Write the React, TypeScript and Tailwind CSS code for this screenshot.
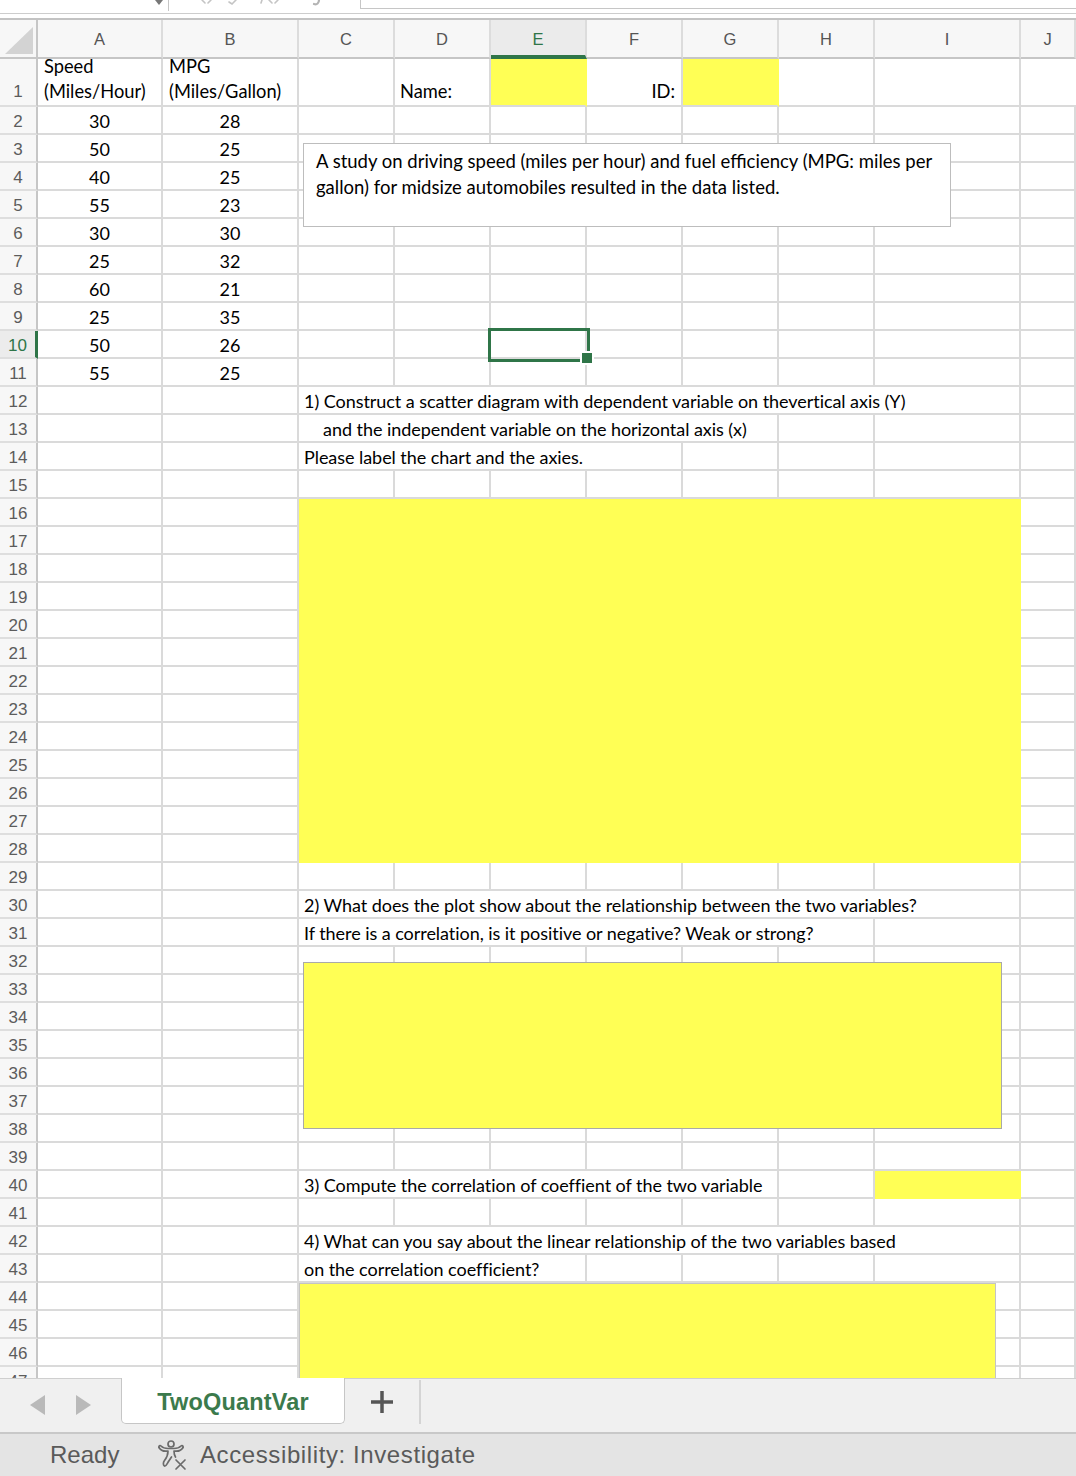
import React from 'react';

type Col = 'A' | 'B' | 'C' | 'D' | 'E' | 'F' | 'G' | 'H' | 'I' | 'J';
const COLS: Col[] = ['A', 'B', 'C', 'D', 'E', 'F', 'G', 'H', 'I', 'J'];

const COL_W: Record<Col, string> = {
  A: 'w-[125px]',
  B: 'w-[136px]',
  C: 'w-[96px]',
  D: 'w-[96px]',
  E: 'w-[96px]',
  F: 'w-[96px]',
  G: 'w-[96px]',
  H: 'w-[96px]',
  I: 'w-[146px]',
  J: 'flex-1',
};

// widths of the C..x ranges that overflowing text runs across
const SPAN_W: Record<string, string> = {
  'C-E': 'w-[288px]',
  'C-F': 'w-[384px]',
  'C-G': 'w-[480px]',
  'C-H': 'w-[576px]',
  'C-I': 'w-[722px]',
};

type Seg = {
  col?: Col;
  span?: string;
  text?: string;
  fill?: boolean;
  indent?: boolean;
};

const DATA: Record<number, [string, string]> = {
  2: ['30', '28'],
  3: ['50', '25'],
  4: ['40', '25'],
  5: ['55', '23'],
  6: ['30', '30'],
  7: ['25', '32'],
  8: ['60', '21'],
  9: ['25', '35'],
  10: ['50', '26'],
  11: ['55', '25'],
};

const plain = (from: Col[]): Seg[] => from.map((c) => ({ col: c }));

const tailFor = (r: number): Seg[] => {
  if (r >= 16 && r <= 28) return [{ span: 'C-I', fill: true }, { col: 'J' }];
  switch (r) {
    case 12:
      return [{ span: 'C-I', text: '1) Construct a scatter diagram with dependent variable on thevertical axis (Y)' }, { col: 'J' }];
    case 13:
      return [{ span: 'C-G', text: 'and the independent variable on the horizontal axis (x)', indent: true }, ...plain(['H', 'I', 'J'])];
    case 14:
      return [{ span: 'C-F', text: 'Please label the chart and the axies.' }, ...plain(['G', 'H', 'I', 'J'])];
    case 30:
      return [{ span: 'C-I', text: '2) What does the plot show about the relationship between the two variables?' }, { col: 'J' }];
    case 31:
      return [{ span: 'C-H', text: 'If there is a correlation, is it positive or negative? Weak or strong?' }, ...plain(['I', 'J'])];
    case 40:
      return [{ span: 'C-G', text: '3) Compute the correlation of coeffient of the two variable' }, { col: 'H' }, { col: 'I', fill: true }, { col: 'J' }];
    case 42:
      return [{ span: 'C-I', text: '4) What can you say about the linear relationship of the two variables based' }, { col: 'J' }];
    case 43:
      return [{ span: 'C-E', text: 'on the correlation coefficient?' }, ...plain(['F', 'G', 'H', 'I', 'J'])];
    default:
      return plain(['C', 'D', 'E', 'F', 'G', 'H', 'I', 'J']);
  }
};

const RowHeader = ({ n, active, tall }: { n: number; active?: boolean; tall?: boolean }) => (
  <div
    className={`w-[38px] shrink-0 flex justify-center border-b-2 border-b-[#dedede] font-['Liberation_Sans',sans-serif] text-[17px] ${
      tall ? 'items-end pb-[1px]' : 'items-center pt-[3px]'
    } ${active ? 'bg-[#ececec] text-[#2f7548] border-r-[3px] border-r-[#2f7548]' : 'bg-[#f7f7f7] text-[#5c5c5c] border-r-2 border-r-[#c6c6c6]'}`}
  >
    {n}
  </div>
);

const Cell = ({ seg }: { seg: Seg }) => {
  const w = seg.span ? SPAN_W[seg.span] : COL_W[seg.col as Col];
  return (
    <div
      className={`${w} shrink-0 flex items-center pt-[3px] whitespace-nowrap border-r-2 border-b-2 ${
        seg.fill ? 'bg-[#ffff55] border-[#ffff55]' : 'border-[#dadada]'
      } ${seg.indent ? 'pl-[24px]' : 'pl-[5px]'} text-[18px] tracking-[-0.05px]`}
    >
      {seg.text}
    </div>
  );
};

const DataRow = ({ r }: { r: number }) => {
  const d = DATA[r];
  return (
    <div className="h-[28px] flex shrink-0">
      <RowHeader n={r} active={r === 10} />
      <div className="w-[125px] shrink-0 flex items-center justify-center pt-[3px] border-r-2 border-b-2 border-[#dadada] text-[18px]">
        {d ? d[0] : ''}
      </div>
      <div className="w-[136px] shrink-0 flex items-center justify-center pt-[3px] border-r-2 border-b-2 border-[#dadada] text-[18px]">
        {d ? d[1] : ''}
      </div>
      {tailFor(r).map((s, i) => (
        <Cell key={i} seg={s} />
      ))}
    </div>
  );
};

const FirstRow = () => (
  <div className="h-[48px] flex shrink-0 text-[18.3px]">
    <RowHeader n={1} tall />
    <div className="w-[125px] shrink-0 flex flex-col justify-end pl-[6px] pb-0 leading-[27px] border-r-2 border-b-2 border-[#dadada]">
      <span className="-mb-[2px]">Speed</span>
      <span>(Miles/Hour)</span>
    </div>
    <div className="w-[136px] shrink-0 flex flex-col justify-end pl-[6px] pb-0 leading-[27px] border-r-2 border-b-2 border-[#dadada]">
      <span className="-mb-[2px]">MPG</span>
      <span>(Miles/Gallon)</span>
    </div>
    <div className="w-[96px] shrink-0 border-r-2 border-b-2 border-[#dadada]" />
    <div className="w-[96px] shrink-0 flex items-end pl-[5px] leading-[27px] border-r-2 border-b-2 border-[#dadada]">
      Name:
    </div>
    <div className="w-[96px] shrink-0 bg-[#ffff55] border-r-2 border-r-[#ffff55] border-b-2 border-b-[#dadada]" />
    <div className="w-[96px] shrink-0 flex items-end justify-end pr-[6px] leading-[27px] border-r-2 border-b-2 border-[#dadada]">
      ID:
    </div>
    <div className="w-[96px] shrink-0 bg-[#ffff55] border-r-2 border-r-[#ffff55] border-b-2 border-b-[#dadada]" />
    <div className="w-[96px] shrink-0 border-r-2 border-b-2 border-[#dadada]" />
    <div className="w-[146px] shrink-0 border-r-2 border-b-2 border-[#dadada]" />
    <div className="flex-1 border-b-2 border-[#dadada]" />
  </div>
);

const HeaderRow = () => (
  <div className="h-[39px] flex shrink-0 font-['Liberation_Sans',sans-serif] text-[16.5px] text-[#555]">
    <div className="w-[38px] shrink-0 bg-[#f7f7f7] border-r-2 border-b-2 border-[#c6c6c6] flex items-end justify-end pr-[3px] pb-[3px]">
      <svg width="28" height="27" viewBox="0 0 28 27">
        <polygon points="28,0 28,27 0,27" fill="#d3d3d3" />
      </svg>
    </div>
    {COLS.map((c) =>
      c === 'E' ? (
        <div
          key={c}
          className={`${COL_W[c]} shrink-0 flex items-center justify-center pt-[4px] bg-[#ebebeb] text-[#2f7548] border-r-2 border-r-[#dcdcdc] border-b-[4px] border-b-[#2f7548]`}
        >
          {c}
        </div>
      ) : (
        <div
          key={c}
          className={`${COL_W[c]} shrink-0 flex items-center justify-center pt-[2px] bg-[#f7f7f7] border-r-2 border-r-[#dcdcdc] border-b-2 border-b-[#c6c6c6]`}
        >
          {c}
        </div>
      )
    )}
  </div>
);

// bottoms of the formula bar buttons, mostly scrolled out of view
const ClippedButtons = () => (
  <svg width="191" height="11" viewBox="0 0 191 11" fill="none" stroke="#c4c4c4" strokeWidth="1.6" strokeLinecap="round">
    <path d="M33 0 L36 3 M42 0 L39 3" />
    <path d="M60 2 L63 4 L67 0" />
    <path d="M93 0 L92 3 M100 0 L103 3 M106 3 L109 0" />
    <path d="M150 0 C150 3 148 5 145 4" strokeWidth="2.2" stroke="#b3b3b3" />
  </svg>
);

const TopStrip = () => (
  <>
    <div className="h-[14px] shrink-0 flex items-start border-b border-[#cdcdcd]">
      <div className="w-[169px] h-[11px] shrink-0 border-r border-[#c6c6c6] flex justify-end pr-[5px]">
        <svg width="8" height="5" viewBox="0 0 8 5">
          <polygon points="0,0 8,0 4,5" fill="#777" />
        </svg>
      </div>
      <div className="w-[191px] h-[11px] shrink-0 overflow-hidden">
        <ClippedButtons />
      </div>
      <div className="flex-1 h-[9px] border-l border-b border-[#c6c6c6]" />
    </div>
    <div className="h-[6px] shrink-0 border-b-2 border-[#c3c3c3]" />
  </>
);

const AccessIcon = () => (
  <svg width="34" height="32" viewBox="0 0 34 32" fill="none" stroke="#6b6b6b" strokeWidth="1.7" strokeLinecap="round" strokeLinejoin="round">
    <circle cx="15" cy="5" r="3" />
    <path d="M3 8.5 C5 12 9 12.5 12 12 C12 16 10.5 19 8.5 21.5 C7 23.5 7 26 8.5 27 C10 27.5 11 25 12.5 22.5 C13.5 21 14.5 19.5 15.5 18" />
    <path d="M27 8.5 C25 12 21 12.5 18 12 C18 14.5 18.5 16.5 19.5 18" />
    <path d="M3 8.5 C2.5 7 4 6 5 7 C7 9 9 9.5 12 9.5 L18 9.5 C21 9.5 23 9 25 7 C26 6 27.5 7 27 8.5" />
    <path d="M20 21 L29 30 M29 21 L20 30" />
  </svg>
);

const TabBar = () => (
  <div className="h-[54px] shrink-0 flex items-start bg-[#f0f0f0] border-t border-[#cfcfcf]">
    <div className="w-[121px] h-[52px] shrink-0 flex items-center pl-[30px] gap-[31px]">
      <svg width="15" height="20" viewBox="0 0 15 20">
        <polygon points="15,0 15,20 0,10" fill="#b9b9b9" />
      </svg>
      <svg width="15" height="20" viewBox="0 0 15 20">
        <polygon points="0,0 0,20 15,10" fill="#b9b9b9" />
      </svg>
    </div>
    <div className="w-[224px] h-[46px] shrink-0 -mt-px pt-[4px] bg-white border-x border-b border-[#c6c6c6] rounded-b-[5px] flex items-center justify-center text-[#3b7a4c] font-bold text-[23.5px] tracking-[0.15px] font-['Liberation_Sans',sans-serif]">
      TwoQuantVar
    </div>
    <div className="w-[76px] h-[44px] shrink-0 flex items-center justify-center border-r-2 border-[#d4d4d4] mt-[1px]">
      <svg width="22" height="22" viewBox="0 0 22 22">
        <rect x="0" y="9.25" width="22" height="3.5" fill="#555" />
        <rect x="9.25" y="0" width="3.5" height="22" fill="#555" />
      </svg>
    </div>
  </div>
);

const StatusBar = () => (
  <div className="h-[44px] shrink-0 flex items-center bg-[#e4e4e4] border-t-2 border-[#c8c8c8] font-['Liberation_Sans',sans-serif] text-[24px] text-[#5a5a5a]">
    <span className="pl-[50px] w-[156px]">Ready</span>
    <AccessIcon />
    <span className="pl-[10px] tracking-[0.6px]">Accessibility: Investigate</span>
  </div>
);

export default function App() {
  const rows: number[] = [];
  for (let r = 2; r <= 47; r++) rows.push(r);

  return (
    <div className="w-[1076px] h-[1476px] bg-white overflow-hidden flex flex-col font-['Lato',sans-serif] text-black">
      <TopStrip />
      <div className="relative h-[1358px] shrink-0 overflow-hidden flex flex-col">
        <HeaderRow />
        <FirstRow />
        {rows.map((r) => (
          <DataRow key={r} r={r} />
        ))}

        {/* description text box */}
        <div className="absolute left-[303px] top-[123px] w-[648px] h-[84px] bg-white border border-[#bdbdbd] pl-[12px] pt-[4px] text-[18.5px] leading-[26px] whitespace-nowrap">
          A study on driving speed (miles per hour) and fuel efficiency (MPG: miles per
          <br />
          gallon) for midsize automobiles resulted in the data listed.
        </div>

        {/* answer box for question 2 */}
        <div className="absolute left-[303px] top-[942px] w-[699px] h-[167px] bg-[#ffff55] border border-[#a9a9a9]" />

        {/* answer box for question 4 */}
        <div className="absolute left-[299px] top-[1263px] w-[697px] h-[120px] bg-[#ffff55] border border-[#c4c4c4]" />

        {/* active cell E10 */}
        <div className="absolute left-[488px] top-[308px] w-[102px] h-[34px] border-[3px] border-[#2f7548]" />
        <div className="absolute left-[580px] top-[331px] w-[14px] h-[14px] bg-white" />
        <div className="absolute left-[582px] top-[333px] w-[10px] h-[10px] bg-[#2f7548]" />
      </div>
      <TabBar />
      <StatusBar />
    </div>
  );
}
